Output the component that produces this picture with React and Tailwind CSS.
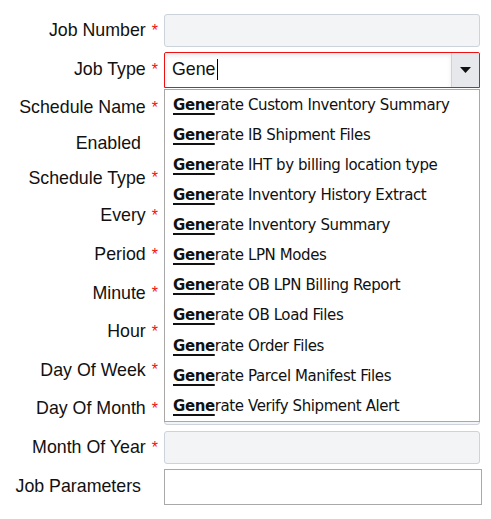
import React from 'react';

const rows = [
  { label: 'Job Number', req: true, h: 'h-[39px]', field: 'disabled' },
  { label: 'Job Type', req: true, h: 'h-[39px]', field: 'combo' },
  { label: 'Schedule Name', req: true, h: 'h-[37px]', field: 'text' },
  { label: 'Enabled', req: false, h: 'h-[34px]', field: 'none' },
  { label: 'Schedule Type', req: true, h: 'h-[36px]', field: 'text' },
  { label: 'Every', req: true, h: 'h-[39px]', field: 'text' },
  { label: 'Period', req: true, h: 'h-[39px]', field: 'text' },
  { label: 'Minute', req: true, h: 'h-[38.5px]', field: 'text' },
  { label: 'Hour', req: true, h: 'h-[38.5px]', field: 'text' },
  { label: 'Day Of Week', req: true, h: 'h-[38.5px]', field: 'text' },
  { label: 'Day Of Month', req: true, h: 'h-[38.5px]', field: 'disabled' },
  { label: 'Month Of Year', req: true, h: 'h-[39px]', field: 'disabled' },
  { label: 'Job Parameters', req: false, h: 'h-[39px]', field: 'plain' },
];

const options = [
  'Custom Inventory Summary',
  'IB Shipment Files',
  'IHT by billing location type',
  'Inventory History Extract',
  'Inventory Summary',
  'LPN Modes',
  'OB LPN Billing Report',
  'OB Load Files',
  'Order Files',
  'Parcel Manifest Files',
  'Verify Shipment Alert',
];

function Field({ type }) {
  if (type === 'disabled') {
    return <div className="w-[316px] h-[33px] bg-[#f3f4f6] border border-[#cdd3da] rounded-[3px]" />;
  }
  if (type === 'text') {
    return <div className="w-[316px] h-[33px] bg-white border border-[#cdd3da] rounded-[3px]" />;
  }
  if (type === 'plain') {
    return <div className="w-[318px] h-[36px] bg-white border border-[#a9a9a9]" />;
  }
  if (type === 'combo') {
    return (
      <div className="w-[316px] h-[36px] border border-[#ee1111] rounded-t-[2px] flex bg-white overflow-hidden">
        <div className="flex-1 flex items-center pl-[7px] shadow-[inset_0_3px_4px_rgba(0,0,0,0.08)]">
          <span>Gene</span>
          <span className="inline-block w-px h-[21px] bg-black ml-[1px]" />
        </div>
        <div className="w-[28px] bg-[#e6e8eb] border-l border-[#cfd3d8] flex items-center justify-center">
          <svg width="11" height="6" viewBox="0 0 11 6">
            <polygon points="0,0 11,0 5.5,6" fill="#111" />
          </svg>
        </div>
      </div>
    );
  }
  return null;
}

export default function App() {
  return (
    <div
      className="relative w-[491px] h-[519px] bg-white text-[17.8px] text-[#111]"
      style={{ fontFamily: '"Liberation Sans", Arial, sans-serif' }}
    >
      <div className="flex flex-col pt-[11px]">
        {rows.map((r) => (
          <div key={r.label} className={`flex items-center ${r.h}`}>
            <div className="w-[158px] flex justify-end items-center whitespace-nowrap">
              {r.req ? (
                <>
                  <span>{r.label}</span>
                  <span className="text-[#ee1111] ml-[6px] text-[16px]">*</span>
                </>
              ) : (
                <span className="pr-[17px]">{r.label}</span>
              )}
            </div>
            <div className="ml-[6px]">
              <Field type={r.field} />
            </div>
          </div>
        ))}
      </div>

      <div
        className="absolute left-[164px] top-[89px] w-[316px] h-[333px] bg-white border border-[#a8a8a8] text-[15px] tracking-[-0.4px] text-[#111]"
        style={{ fontFamily: '"DejaVu Sans", Verdana, sans-serif' }}
      >
        {options.map((o) => (
          <div key={o} className="h-[30.1px] flex items-center px-[8px] whitespace-nowrap">
            <span className="font-bold underline underline-offset-[3px] decoration-[2px]">Gene</span>
            <span>rate {o}</span>
          </div>
        ))}
      </div>
    </div>
  );
}
